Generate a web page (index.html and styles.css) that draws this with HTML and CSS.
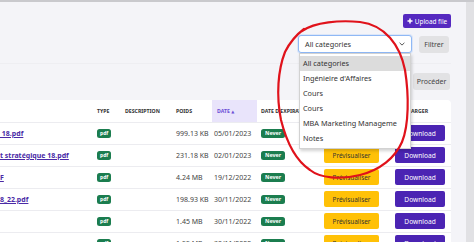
FILE: index.html
```html
<!DOCTYPE html>
<html lang="fr">
<head>
    <meta charset="UTF-8">
    <meta name="viewport" content="width=device-width, initial-scale=1.0">
    <title>Documents</title>
    <link rel="stylesheet" href="styles.css">
</head>
<body>
    <div class="topbar"></div>
    <div class="layout">
        <div class="main">
            <div class="toolbar">
                <button class="btn-upload">
                    <svg width="6" height="6" viewBox="0 0 6 6"><path d="M3 0.5v5M0.5 3h5" stroke="#fff" stroke-width="1.5"/></svg>
                    Upload file
                </button>
            </div>
            <div class="filters">
                <div class="select">
                    <span>All categories</span>
                    <svg class="chevron" width="6" height="4" viewBox="0 0 6 4"><path d="M0.6 0.8L3 3.1L5.4 0.8" fill="none" stroke="#444" stroke-width="0.9"/></svg>
                    <ul class="dropdown">
                        <li class="active">All categories</li>
                        <li>Ingénieire d'Affaires</li>
                        <li>Cours</li>
                        <li>Cours</li>
                        <li>MBA Marketing Manageme</li>
                        <li>Notes</li>
                    </ul>
                </div>
                <button class="btn-gray btn-filter">Filtrer</button>
            </div>
            <div class="actions">
                <button class="btn-gray btn-proceed">Procéder</button>
            </div>
            <div class="card">
                <table>
                    <colgroup>
                        <col style="width:93px">
                        <col style="width:28px">
                        <col style="width:51px">
                        <col style="width:40px">
                        <col style="width:45px">
                        <col style="width:63px">
                        <col style="width:71px">
                        <col style="width:60px">
                    </colgroup>
                    <thead>
                        <tr>
                            <th class="name"></th>
                            <th>Type</th>
                            <th>Description</th>
                            <th>Poids</th>
                            <th class="sorted">Date <span class="caret">&#9650;</span></th>
                            <th>Date d'expiration</th>
                            <th></th>
                            <th class="dl-head">Télécharger</th>
                        </tr>
                    </thead>
                    <tbody>
                        <tr>
                            <td class="name"><a href="#">&nbsp;18.pdf</a></td>
                            <td><span class="badge">pdf</span></td>
                            <td></td>
                            <td>999.13 KB</td>
                            <td class="date">05/01/2023</td>
                            <td><span class="badge never">Never</span></td>
                            <td><button class="btn-preview">Prévisualiser</button></td>
                            <td><button class="btn-download">Download</button></td>
                        </tr>
                        <tr>
                            <td class="name"><a href="#">t stratégique 18.pdf</a></td>
                            <td><span class="badge">pdf</span></td>
                            <td></td>
                            <td>231.18 KB</td>
                            <td class="date">02/01/2023</td>
                            <td><span class="badge never">Never</span></td>
                            <td><button class="btn-preview">Prévisualiser</button></td>
                            <td><button class="btn-download">Download</button></td>
                        </tr>
                        <tr>
                            <td class="name"><a href="#">F</a></td>
                            <td><span class="badge">pdf</span></td>
                            <td></td>
                            <td>4.24 MB</td>
                            <td class="date">19/12/2022</td>
                            <td><span class="badge never">Never</span></td>
                            <td><button class="btn-preview">Prévisualiser</button></td>
                            <td><button class="btn-download">Download</button></td>
                        </tr>
                        <tr>
                            <td class="name"><a href="#">8_22.pdf</a></td>
                            <td><span class="badge">pdf</span></td>
                            <td></td>
                            <td>198.93 KB</td>
                            <td class="date">30/11/2022</td>
                            <td><span class="badge never">Never</span></td>
                            <td><button class="btn-preview">Prévisualiser</button></td>
                            <td><button class="btn-download">Download</button></td>
                        </tr>
                        <tr>
                            <td class="name"></td>
                            <td><span class="badge">pdf</span></td>
                            <td></td>
                            <td>1.45 MB</td>
                            <td class="date">30/11/2022</td>
                            <td><span class="badge never">Never</span></td>
                            <td><button class="btn-preview">Prévisualiser</button></td>
                            <td><button class="btn-download">Download</button></td>
                        </tr>
                        <tr>
                            <td class="name"></td>
                            <td><span class="badge">pdf</span></td>
                            <td></td>
                            <td>1.55 MB</td>
                            <td class="date">30/11/2022</td>
                            <td><span class="badge never">Never</span></td>
                            <td><button class="btn-preview">Prévisualiser</button></td>
                            <td><button class="btn-download">Download</button></td>
                        </tr>
                    </tbody>
                </table>
            </div>
        </div>
        <div class="scrollbar"></div>
    </div>
    <!-- hand-drawn annotation on top of the screenshot -->
    <svg class="annotation" width="474" height="242" viewBox="0 0 474 242">
        <path d="M302 31 C315 22 340 20 360 22 C385 25 400 45 405 70 C409 95 409 125 402 142 C395 158 380 170 360 175 C340 180 320 178 310 170 C295 160 286 140 281 120 C276 95 278 70 285 52 C290 42 296 35 304 29" fill="none" stroke="#e0121b" stroke-width="2.2" stroke-linecap="round"/>
    </svg>
</body>
</html>
```

FILE: styles.css
```css
html, body {
    margin: 0;
    height: 100%;
    overflow: hidden;
}
body {
    font-family: "Noto Sans", "DejaVu Sans", sans-serif;
    background: #f4f4f8;
    color: #333;
    position: relative;
}
button {
    font-family: inherit;
    border: none;
    padding: 0;
    cursor: pointer;
}
.topbar {
    height: 2px;
    background: #c9c9cd;
}
.layout {
    display: flex;
    height: 240px;
}
.main {
    flex: 1;
    min-width: 0;
    padding-right: 15px;
}
.scrollbar {
    width: 8px;
    background: #e1e1e4;
}
.toolbar {
    display: flex;
    justify-content: flex-end;
    padding-top: 12px;
}
.btn-upload {
    display: flex;
    align-items: center;
    justify-content: center;
    gap: 2px;
    width: 48px;
    height: 14px;
    background: #5529c0;
    color: #fff;
    border-radius: 2px;
    font-size: 6.4px;
}
.filters {
    display: flex;
    justify-content: flex-end;
    align-items: flex-start;
    margin-top: 7px;
    padding-right: 2px;
    padding-bottom: 10px;
    border-bottom: 1px solid #eeeef2;
}
.select {
    position: relative;
    box-sizing: border-box;
    width: 114px;
    height: 18px;
    display: flex;
    align-items: center;
    justify-content: space-between;
    padding: 0 6px 0 6px;
    background: #fff;
    border: 1px solid #8fb8f5;
    border-radius: 3px;
    box-shadow: 0 0 0 1px rgba(13, 110, 253, 0.1);
    font-size: 7.3px;
    color: #333;
}
.dropdown {
    position: absolute;
    top: 17px;
    left: 0;
    box-sizing: border-box;
    width: 112px;
    margin: 0;
    padding: 2px 0;
    list-style: none;
    background: #fff;
    border: 1px solid #d2d2d2;
    box-shadow: 1px 2px 3px rgba(0, 0, 0, 0.18);
    z-index: 5;
}
.dropdown li {
    height: 15px;
    line-height: 15px;
    padding-left: 3px;
    white-space: nowrap;
    overflow: hidden;
    color: #333;
}
.dropdown li.active {
    background: #dcdcdc;
}
.btn-gray {
    background: #e2e2e4;
    color: #444;
    border-radius: 3px;
    font-size: 7px;
    height: 17px;
}
.btn-filter {
    width: 30px;
    margin-left: 7px;
    margin-top: 1px;
}
.actions {
    display: flex;
    justify-content: flex-end;
    margin-top: 9px;
    padding-right: 1px;
}
.btn-proceed {
    width: 37px;
}
.card {
    margin-top: 10px;
    background: #fff;
    border-radius: 0 4px 0 0;
}
table {
    width: 451px;
    table-layout: fixed;
    border-collapse: collapse;
}
th, td {
    height: 22px;
    padding: 0 0 0 4px;
    text-align: left;
    vertical-align: middle;
    white-space: nowrap;
    overflow: hidden;
    border-bottom: 1px solid #ececf0;
    box-sizing: border-box;
}
th {
    font-size: 5.2px;
    font-weight: 700;
    text-transform: uppercase;
    color: #333;
}
th.sorted {
    background: #e9e4fb;
    color: #6c4ed6;
    padding-left: 5px;
}
.caret {
    font-size: 4px;
}
th.dl-head {
    padding-left: 1px;
}
td {
    font-size: 7px;
    color: #444;
}
td.name, th.name {
    padding-left: 0;
}
td.name a {
    color: #4a2aa6;
    font-weight: 700;
    font-size: 7px;
}
td.date {
    padding-left: 2px;
}
.badge {
    display: inline-block;
    background: #1b7d4f;
    color: #fff;
    font-size: 5px;
    font-weight: 700;
    line-height: 9px;
    padding: 0 3px;
    border-radius: 2.5px;
}
.badge.never {
    line-height: 8.5px;
    padding: 0 4px;
    font-size: 5.4px;
}
.btn-preview {
    width: 55px;
    height: 16px;
    background: #ffc107;
    color: #333;
    border-radius: 2px;
    font-size: 6.4px;
}
.btn-download {
    width: 50px;
    height: 16px;
    background: #4b24b3;
    color: #fff;
    border-radius: 2px;
    font-size: 6.6px;
}
.annotation {
    position: absolute;
    top: 0;
    left: 0;
    pointer-events: none;
    z-index: 10;
}
```
